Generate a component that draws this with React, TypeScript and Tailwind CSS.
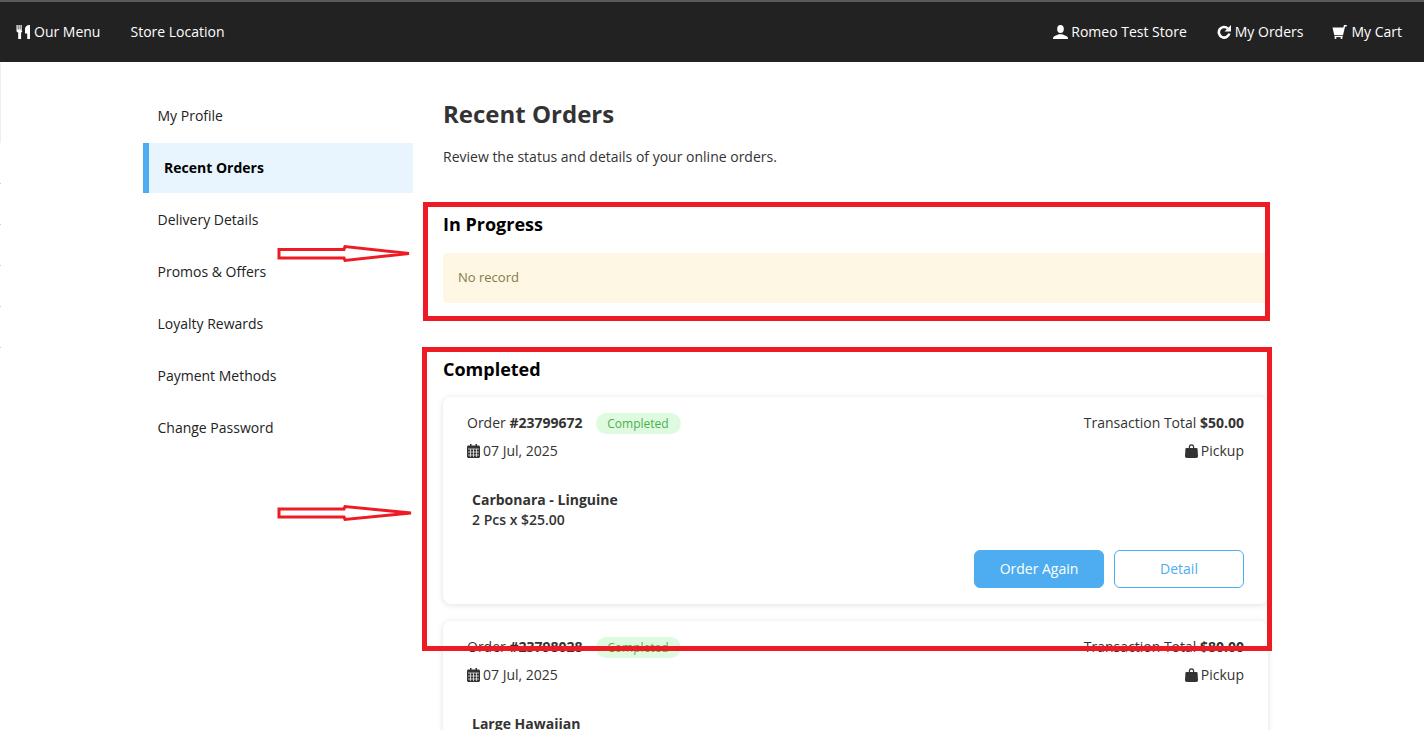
import * as React from "react";

const menu = ["My Profile", "Recent Orders", "Delivery Details", "Promos & Offers", "Loyalty Rewards", "Payment Methods", "Change Password"];
const ticks = [183, 224, 265, 306, 347];

function CutleryIcon() {
  return (
    <svg width="15" height="14" viewBox="0 0 15 14" fill="white">
      <path d="M.5 0h1.200v4.500h.8V0h1.200v4.500h.8V0h1.200v5.500C6.700 6.800 6 7.300 5.100 7.500V14H2.200V7.500C1.200 7.300.5 6.800.5 5.500z" />
      <path d="M9 4C9 1.800 10.800 0 13.200 0h.8v14h-2.800V8.500H9z" />
    </svg>
  );
}

function UserIcon() {
  return (
    <svg width="15" height="14" viewBox="0 0 15 14" fill="white">
      <ellipse cx="7.500" cy="4" rx="3.300" ry="4" />
      <path d="M0 14c0-2.400 1.200-3 3-3.500l2.700-1.300h3.600l2.700 1.300c1.800.5 3 1.100 3 3.500z" />
    </svg>
  );
}

function RefreshIcon() {
  return (
    <svg width="14" height="14" viewBox="0 0 14 14">
      <path d="M10.800 3.400A5.300 5.300 0 1 0 12.300 8.500" fill="none" stroke="white" strokeWidth="2.600" />
      <path d="M14 0V6.500H7.500Z" fill="white" />
    </svg>
  );
}

function CartIcon() {
  return (
    <svg width="15" height="14" viewBox="0 0 15 14" fill="white">
      <path d="M.5 2.500h10.800L12 0h2.800v1.500h-1.700l-2.100 8.700H2.300z" />
      <path d="M2.500 11h8.200v1.100H2.500z" />
      <circle cx="3.500" cy="13" r="1" />
      <circle cx="9.500" cy="13" r="1" />
    </svg>
  );
}

function CalendarIcon() {
  return (
    <svg width="13" height="14" viewBox="0 0 13 14" className="shrink-0">
      <path d="M1.500 1.500h10c.8 0 1.500.7 1.500 1.500v9.500c0 .8-.7 1.500-1.500 1.500h-10C.7 14 0 13.300 0 12.500V3c0-.8.7-1.500 1.500-1.500z" fill="#333" />
      <path d="M3 0h1.500v3H3zM8.500 0H10v3H8.500z" fill="#333" />
      <path d="M1 5h11M1 8h11M1 11h11M3.500 5v8M6.500 5v8M9.500 5v8" stroke="white" strokeWidth=".7" fill="none" />
    </svg>
  );
}

function BagIcon() {
  return (
    <svg width="13" height="14" viewBox="0 0 13 14" fill="#333" className="shrink-0">
      <path d="M3.800 4V3a2.700 2.700 0 0 1 5.400 0v1H8V3a1.500 1.500 0 0 0-3 0v1z" />
      <path d="M1.500 4h10c.6 0 1 .4 1.100 1l.4 7c0 1-.6 2-1.800 2H1.800C.6 14 0 13 0 12l.4-7c.1-.6.500-1 1.100-1z" />
    </svg>
  );
}

function OrderCard({ id, total, item, qty }: { id: string; total: string; item: string; qty: string }) {
  return (
    <div className="mb-[17px] h-[207px] rounded-lg bg-white px-6 pt-4 shadow-[0_1px_6px_rgba(0,0,0,0.12)]">
      <div className="flex h-5 items-center justify-between">
        <div className="flex items-center">
          <span>
            Order <b className="font-bold">#{id}</b>
          </span>
          <span className="ml-[13px] flex h-[21px] w-[85px] items-center justify-center rounded-full bg-[#dffbdf] pt-px text-xs text-[#4caf50]">
            Completed
          </span>
        </div>
        <span>
          Transaction Total <b className="font-bold">{total}</b>
        </span>
      </div>
      <div className="mt-2 flex h-5 items-center justify-between">
        <span className="flex items-center gap-[3px]">
          <CalendarIcon />
          07 Jul, 2025
        </span>
        <span className="flex items-center gap-[3px]">
          <BagIcon />
          Pickup
        </span>
      </div>
      <div className="mt-[29px] pl-[5px] leading-5 font-semibold text-[#333]">
        <div className="font-bold">{item}</div>
        <div>{qty}</div>
      </div>
      <div className="mt-[20px] flex justify-end gap-[10px]">
        <button className="h-[38px] w-[130px] rounded-md border border-[#4dadf0] bg-[#4dadf0] text-white">Order Again</button>
        <button className="h-[38px] w-[130px] rounded-md border border-[#4dadf0] bg-white text-[#4dadf0]">Detail</button>
      </div>
    </div>
  );
}

export default function App() {
  return (
    <div className="relative h-[730px] overflow-hidden bg-white font-['Open_Sans',sans-serif] text-sm text-[#333]">
      {/* Header */}
      <header className="flex h-[62px] items-center justify-between border-t-2 border-[#5a5a5a] bg-[#222] pl-4 pr-[22px] font-medium text-white">
        <nav className="flex items-center gap-[30px]">
          <a className="flex items-center gap-[3px]">
            <CutleryIcon />
            Our Menu
          </a>
          <a>Store Location</a>
        </nav>
        <nav className="flex items-center gap-[29px]">
          <a className="mr-px flex items-center gap-[3px]">
            <UserIcon />
            Romeo Test Store
          </a>
          <a className="flex items-center gap-[4px]">
            <RefreshIcon />
            My Orders
          </a>
          <a className="flex items-center gap-[4px]">
            <CartIcon />
            My Cart
          </a>
        </nav>
      </header>

      <div className="flex pl-[143px] pt-[29px]">
        {/* Sidebar */}
        <aside className="w-[270px] shrink-0">
          {menu.map((label) =>
            label === "Recent Orders" ? (
              <div key={label} className="mb-[2px] flex h-[50px] items-center border-l-[6px] border-[#4dadf0] bg-[#e8f5fe] pl-[15px] font-bold text-black">
                {label}
              </div>
            ) : (
              <div key={label} className="mb-[2px] flex h-[50px] items-center pl-[14.5px] text-[#222]">
                {label}
              </div>
            ),
          )}
        </aside>

        {/* Main */}
        <main className="ml-[30px] w-[825px] shrink-0">
          <h1 className="flex h-[46px] items-center text-2xl font-bold text-[#333]">Recent Orders</h1>
          <p className="mt-[10px] leading-5">Review the status and details of your online orders.</p>

          <h2 className="mt-[45px] text-lg leading-6 font-bold text-black">In Progress</h2>
          <div className="mt-[17px] flex h-[50px] items-center rounded bg-[#fdf7e3] pb-[2px] pl-[15px] text-[13px] text-[#857a4c]">No record</div>

          <h2 className="mt-[54px] text-lg leading-6 font-bold text-black">Completed</h2>
          <div className="mt-4">
            <OrderCard id="23799672" total="$50.00" item="Carbonara - Linguine" qty="2 Pcs x $25.00" />
            <OrderCard id="23798028" total="$80.00" item="Large Hawaiian" qty="2 Pcs x $40.00" />
          </div>
        </main>
      </div>

      {/* Stray marks on the left edge of the capture */}
      <div className="absolute left-0 top-[63px] h-20 w-px bg-[#eeeeee]" />
      {ticks.map((y) => (
        <div key={y} className="absolute left-0 h-px w-px bg-[#cccccc]" style={{ top: y }} />
      ))}

      {/* Red annotations */}
      <div className="absolute left-[423px] top-[202px] h-[119px] w-[847px] border-[5px] border-[#ed1c24]" />
      <div className="absolute left-[422px] top-[347px] h-[304px] w-[850px] border-[5px] border-[#ed1c24]" />
      <svg className="absolute left-0 top-0" width="1424" height="730" fill="none" stroke="#ed1c24" strokeWidth="3">
        <path d="M279 249.500H344L345 246.500L409 253.500L345 260.500L344 258H279Z" />
        <path d="M279 509H344L345 506.500L411 513L345 519.500L344 517H279Z" />
      </svg>
    </div>
  );
}
